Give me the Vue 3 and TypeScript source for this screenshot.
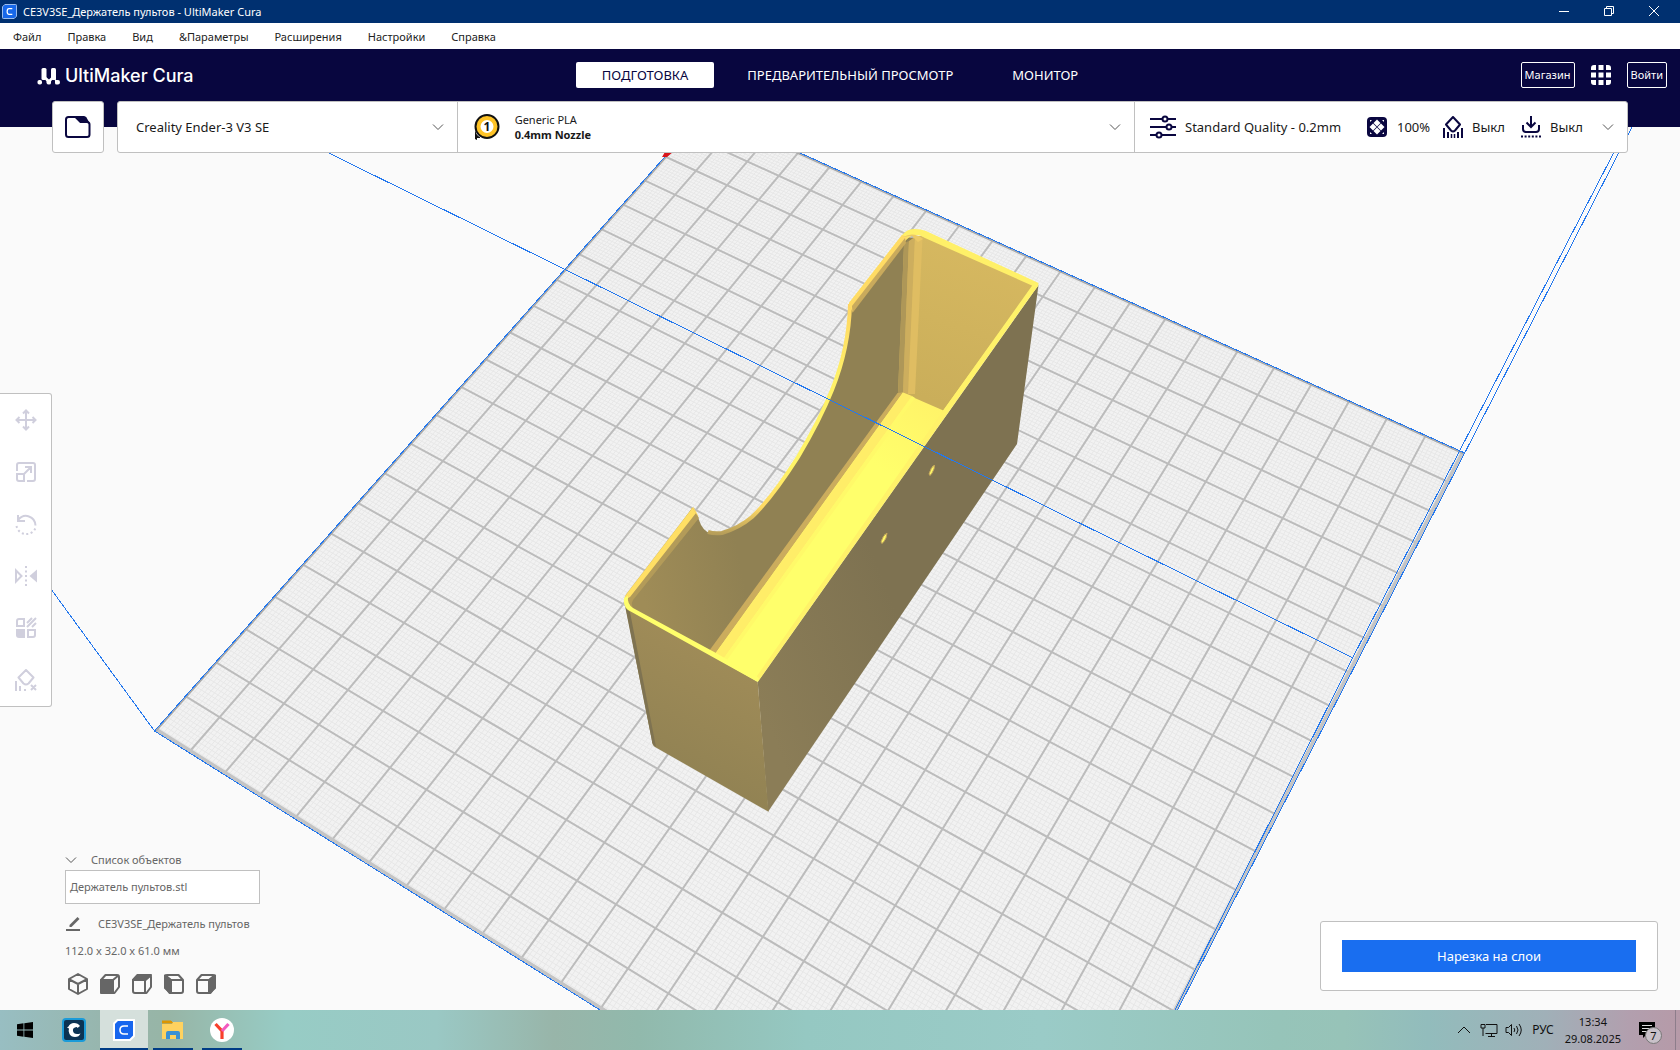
<script setup lang="ts">
import { ref } from 'vue'

type Point = [number, number]

const PLATE_CELLS = 22

/* Screen corners of the build plate: near left, far left, far right, near right */
const corners: Point[] = [
  [154.5, 731],
  [706, 110.5],
  [1464.7, 453],
  [1036.5, 1283.3],
]

/* Perspective mapping from plate units (0..1) to screen coordinates */
function plateProjection([a, b, c, d]: Point[]) {
  const sx = a[0] - b[0] + c[0] - d[0]
  const sy = a[1] - b[1] + c[1] - d[1]
  const dx1 = b[0] - c[0]
  const dx2 = d[0] - c[0]
  const dy1 = b[1] - c[1]
  const dy2 = d[1] - c[1]
  const det = dx1 * dy2 - dx2 * dy1
  const g = (sx * dy2 - dx2 * sy) / det
  const h = (dx1 * sy - sx * dy1) / det
  return (u: number, v: number): Point => {
    const w = g * u + h * v + 1
    return [
      ((b[0] - a[0] + g * b[0]) * u + (d[0] - a[0] + h * d[0]) * v + a[0]) / w,
      ((b[1] - a[1] + g * b[1]) * u + (d[1] - a[1] + h * d[1]) * v + a[1]) / w,
    ]
  }
}

const project = plateProjection(corners)

function segment(p: Point, q: Point): string {
  return `M${p[0].toFixed(1)} ${p[1].toFixed(1)}L${q[0].toFixed(1)} ${q[1].toFixed(1)}`
}

function gridPath(count: number): string {
  let d = ''
  for (let i = 1; i < count; i++) {
    const t = i / count
    d += segment(project(t, 0), project(t, 1)) + segment(project(0, t), project(1, t))
  }
  return d
}

const minorGrid = gridPath(PLATE_CELLS * 10)
const majorGrid = gridPath(PLATE_CELLS)
const plateOutline = 'M' + corners.map((p) => p.join(' ')).join('L') + 'Z'

const menus = ['Файл', 'Правка', 'Вид', '&Параметры', 'Расширения', 'Настройки', 'Справка']
const stages = ['ПОДГОТОВКА', 'ПРЕДВАРИТЕЛЬНЫЙ ПРОСМОТР', 'МОНИТОР']
const activeStage = ref(0)
const projectName = ref('CE3V3SE_Держатель пультов')
const views = ['3D', 'Спереди', 'Сверху', 'Слева', 'Справа']
const tools = ['Перемещение', 'Масштаб', 'Поворот', 'Зеркало', 'Параметры объекта', 'Блокировка поддержки']
</script>

<template>
  <div class="window">
    <header class="titlebar">
      <svg class="app-icon" viewBox="0 0 16 16">
        <path d="M3 .5h11.500q1 0 1 1V13l-2.500 2.500H1.500q-1 0-1-1V3z" fill="#1668ea" stroke="#a9c9f5" />
        <path d="M11 5H7.500Q5.500 5 5.500 8t2 3H11" fill="none" stroke="#fff" stroke-width="1.300" />
      </svg>
      <span class="title">CE3V3SE_Держатель пультов - UltiMaker Cura</span>
      <button class="win-btn" aria-label="Свернуть"><svg viewBox="0 0 12 12"><path d="M1 6.500h10" /></svg></button>
      <button class="win-btn" aria-label="Восстановить"><svg viewBox="0 0 12 12"><path d="M1.500 3.500h7v7h-7zM3.500 3.500v-2h7v7h-2" /></svg></button>
      <button class="win-btn" aria-label="Закрыть"><svg viewBox="0 0 12 12"><path d="M1 1l10 10M11 1L1 11" /></svg></button>
    </header>

    <nav class="menubar">
      <button v-for="m in menus" :key="m">{{ m }}</button>
    </nav>

    <div class="header">
      <div class="brand">
        <svg viewBox="0 0 24 17" fill="#fff">
          <rect x="4.500" y="0" width="5" height="12" rx="1.500" />
          <rect x="14" y="0" width="5" height="12" rx="1.500" />
          <path d="M8.500 8.500L12 11.500L15 8.500V12l-1 1.500V15q0 1.500-2 1.500T9.500 15v-1.500L8.500 12z" />
          <path d="M17 8.500l2 3.500h2q2 0 2 2.200T21 16.500h-1.500Q18 16.500 18 15v-2z" />
          <rect x="0.500" y="12" width="4.500" height="4.500" rx="1.800" />
        </svg>
        <span>UltiMaker Cura</span>
      </div>
      <div class="stages">
        <button v-for="(s, i) in stages" :key="s" :class="{ active: i === activeStage }" @click="activeStage = i">{{ s }}</button>
      </div>
      <div class="account">
        <button class="outlined">Магазин</button>
        <button class="apps" aria-label="Приложения">
          <svg viewBox="0 0 20 20" fill="#fff">
            <path d="M3 0h2v5H0V3q0-3 3-3zM7.500 0h5v5h-5zM15 0h2q3 0 3 3v2h-5zM0 7.500h5v5H0zM7.500 7.500h5v5h-5zM15 7.500h5v5h-5zM0 15h5v5H3q-3 0-3-3zM7.500 15h5v5h-5zM15 15h5v2q0 3-3 3h-2z" />
          </svg>
        </button>
        <button class="outlined">Войти</button>
      </div>
    </div>

    <main class="workspace">
      <svg class="scene" viewBox="0 127 1680 883" preserveAspectRatio="xMidYMid slice" role="img" aria-label="Сцена">
        <defs>
          <clipPath id="plate"><path :d="plateOutline" /></clipPath>
          <linearGradient id="side" gradientUnits="userSpaceOnUse" x1="750" y1="680" x2="900" y2="620">
            <stop offset="0" stop-color="#8b7d57" /><stop offset="1" stop-color="#7e7251" />
          </linearGradient>
          <linearGradient id="front" gradientUnits="userSpaceOnUse" x1="730" y1="650" x2="670" y2="770">
            <stop offset="0" stop-color="#a08c58" /><stop offset="1" stop-color="#918253" />
          </linearGradient>
          <linearGradient id="inner" gradientUnits="userSpaceOnUse" x1="640" y1="580" x2="740" y2="560">
            <stop offset="0" stop-color="#9f8c57" /><stop offset="1" stop-color="#908153" />
          </linearGradient>
          <linearGradient id="back" gradientUnits="userSpaceOnUse" x1="980" y1="250" x2="930" y2="400">
            <stop offset="0" stop-color="#d6b860" /><stop offset="1" stop-color="#caae5a" />
          </linearGradient>
          <linearGradient id="floor" gradientUnits="userSpaceOnUse" x1="930" y1="390" x2="870" y2="460">
            <stop offset="0" stop-color="#fff268" /><stop offset="1" stop-color="#ffff6b" />
          </linearGradient>
          <linearGradient id="arc" gradientUnits="userSpaceOnUse" x1="0" y1="305" x2="0" y2="535">
            <stop offset="0" stop-color="#ffd563" /><stop offset=".3" stop-color="#fff067" />
            <stop offset=".7" stop-color="#fff567" /><stop offset=".88" stop-color="#ffd964" /><stop offset="1" stop-color="#b39b59" />
          </linearGradient>
        </defs>

        <path :d="plateOutline" fill="#f2f2f2" />
        <g clip-path="url(#plate)" fill="none">
          <path :d="minorGrid" stroke="#e7e7e7" />
          <path :d="majorGrid" stroke="#bcbcbc" stroke-width="2" />
          <path d="M154.500 731L1036.500 1283.300L1464.700 453" stroke="#c4c4c4" stroke-width="8" />
          <path d="M154.500 731L706 110.500L1464.700 453" stroke="#aaa" stroke-width="4" />
        </g>
        <g class="volume">
          <path :d="plateOutline" />
          <path d="M40 574L154.500 731M1464.700 453L1632 127" />
        </g>
        <path d="M662 157l3-5h8l-6 5z" fill="#d8161c" />

        <!-- Long inner wall with the cut-out -->
        <path d="M625 600L692.300 508L697 515L701 525Q706 534 715 534Q731 533 752 517Q771 498 797 457Q818 422 830 393Q849 345 849 304L902 236L925 240L903 398L715 656L630 612Z" fill="url(#inner)" />
        <path d="M692 508Q695 512 697 517" stroke="#ffdc64" stroke-width="3" fill="none" />
        <path d="M708 532Q714 534 722 533Q739 528 752 517Q772 498 798 457Q820 420 832 390Q849 348 850 304" fill="none" stroke="url(#arc)" stroke-width="4" />
        <!-- Back wall and its rounded corner -->
        <path d="M904 246L916 236L922 236L1034 284L944 412L898 393Z" fill="url(#back)" />
        <path d="M904 243L909 241L903 393H898Z" fill="#ae9758" />
        <path d="M909 241L915 237L908 394L903 393Z" fill="#cdae5e" />
        <path d="M915 237L922.500 238L915 394H908Z" fill="#dfbd62" />
        <!-- Floor -->
        <path d="M902 392.500L944.500 411L942 415L757.700 681.700L712 652Z" fill="url(#floor)" />
        <path d="M897.500 393L903 392.500L715 654L709 651Z" fill="#cbac5d" />
        <path d="M903 392.500L912 396L724 658L715 654Z" fill="#ffed68" />
        <path d="M912 396L915 398L727 660L724 658Z" fill="#fff969" />
        <!-- Outer faces -->
        <path d="M757.700 681.700L1038.500 285L1017 444L768 811.700Z" fill="url(#side)" />
        <path d="M625.300 606L757.700 681.700L768.500 811.700L655 747Q652 745 652 741Z" fill="url(#front)" />
        <path d="M625.300 607L630 612L656 747Q652 744 652 741Z" fill="#7f7351" />
        <!-- Upper rim -->
        <path d="M849 303L902 235Q908 228 915 229Q921 229 926 231L1038.500 283L1038 286L941 415L942 412L1033 286L925 238Q915 231 906 240L852.500 311Z" fill="#fff068" />
        <path d="M849 303L902 235L908 237L852.500 312Z" fill="#ffdb64" />
        <path d="M852 306L905 238L906 243L852.500 313Z" fill="#c9aa5c" />
        <path d="M903 237Q914 231 923 239L918 242L912 236Z" fill="#ecc865" />
        <path d="M758 681.700L1038.500 285L1034 283L940 415L757 676Z" fill="#fff269" />
        <path d="M624 601Q625 595 628 592L692.300 508L699 518L633 600Q630 605 635 611Z" fill="#b39b59" />
        <path d="M624 600Q625 595 628 592L692.300 508L696 513L630 597Z" fill="#ffdf64" />
        <path d="M624 598Q623 606 628 610L757.700 682L759 678L716 653L633 608Q627 604 628 596Z" fill="#ffff6b" />
        <!-- Screw holes -->
        <path d="M930 475.500L929 474Q931 467 934.500 465L934 469Q932 474 930 475.500Z" fill="#fff968" stroke="#c4a65b" />
        <path d="M882 543.500L881 542Q883 535 887 533L886 538Q884 542 882 543.500Z" fill="#fff968" stroke="#c4a65b" />

        <path class="volume" d="M276 127L1352.700 657.700M1174 1012L1352.700 657.700L1627 127" />
      </svg>

      <div class="overlay">
        <div class="config-row">
          <button class="open-file" aria-label="Открыть файл">
            <svg width="28" height="24" viewBox="0 0 28 24">
              <path d="M2 4.500Q2 2 4.500 2h7l5 5H23q2.500 0 2.500 2.500v10Q25.500 22 23 22H4.500Q2 22 2 19.500z" fill="none" stroke="#0a0740" stroke-width="2" stroke-linejoin="round" />
              <path d="M11 1h9q1.500 0 2.500 1.500L25 7H16z" fill="#0a0740" />
            </svg>
          </button>
          <div class="config">
            <button class="machine">
              <span class="lg">Creality Ender-3 V3 SE</span>
              <svg class="chev" viewBox="0 0 12 8"><path d="M1 1.500l5 5 5-5" /></svg>
            </button>
            <button class="material">
              <svg width="27" height="28" viewBox="0 0 27 28">
                <circle cx="14" cy="13.500" r="11" fill="#fff" stroke="#111" stroke-width="3" />
                <circle cx="14" cy="13.500" r="8.500" fill="none" stroke="#fec327" stroke-width="4" />
                <path d="M2 26V14q0 8 5 10v1H4v2z" fill="#111" />
                <text x="14" y="18" text-anchor="middle">1</text>
              </svg>
              <span class="material-text"><span>Generic PLA</span><b>0.4mm Nozzle</b></span>
              <svg class="chev" viewBox="0 0 12 8"><path d="M1 1.500l5 5 5-5" /></svg>
            </button>
            <button class="settings">
              <svg width="26" height="24" viewBox="0 0 26 24" fill="none" stroke="#0a0740" stroke-width="2">
                <path d="M0 4h12M18 4h8M0 12h16M22 12h4M0 20h6M12 20h14" />
                <circle cx="15" cy="4" r="2.500" /><circle cx="19" cy="12" r="2.500" /><circle cx="9" cy="20" r="2.500" />
              </svg>
              <span class="lg profile">Standard Quality - 0.2mm</span>
              <svg width="20" height="20" viewBox="0 0 20 20">
                <rect width="20" height="20" rx="4" fill="#0a0740" />
                <path d="M10 2.500l3.500 3.500L10 9.500 6.500 6zM10 10.500l3.500 3.500-3.500 3.500L6.500 14zM6 6.500L9.500 10 6 13.500 2.500 10zM14 6.500l3.500 3.500-3.500 3.500-3.500-3.500zM3 5V3h2zM15 3h2v2zM3 15v2h2zM17 15v2h-2z" fill="#fff" />
              </svg>
              <span class="lg infill">100%</span>
              <svg width="20" height="22" viewBox="0 0 20 22" fill="none" stroke="#0a0740" stroke-width="2">
                <path d="M10 1l7 7.500-5 6q-2 2-4 0l-5-6z" stroke-linejoin="round" /><path d="M1 12v10M19 12v10M5 16v6M15 16v6" /><path d="M8.500 18v4M11.500 18v4" stroke-width="1.500" />
              </svg>
              <span class="lg support">Выкл</span>
              <svg width="20" height="22" viewBox="0 0 20 22" fill="none" stroke="#0a0740" stroke-width="2">
                <path d="M10 0v10M5.500 6.500L10 11l4.500-4.500M2 9v4q0 3 3 3h10q3 0 3-3V9" /><path d="M0 20.500h20" stroke-dasharray="2 1.600" />
              </svg>
              <span class="lg adhesion">Выкл</span>
              <svg class="chev" viewBox="0 0 12 8"><path d="M1 1.500l5 5 5-5" /></svg>
            </button>
          </div>
        </div>

        <div class="toolbar">
          <button v-for="(t, i) in tools" :key="t" :aria-label="t" disabled>
            <svg width="22" height="22" viewBox="0 0 22 22" fill="none" stroke="#d0cfdd" stroke-width="2">
              <path v-if="i === 0" d="M11 2v18M2 11h18M8 4.500L11 1.500l3 3M8 17.500l3 3 3-3M4.500 8l-3 3 3 3M17.500 8l3 3-3 3" />
              <path v-else-if="i === 1" d="M2 10V4q0-2 2-2h14q2 0 2 2v14q0 2-2 2h-6M2 13h7v7H4q-2 0-2-2zM9 13l7-7M10 6h6v6" />
              <g v-else-if="i === 2"><path d="M3 2v6h7M3 7Q8 1 14 3.500q6 2 6.500 9" /><path d="M1.500 13a10 10 0 0 0 19 2" stroke-dasharray="2 2.500" /></g>
              <g v-else-if="i === 3"><path d="M1 5.500v11l5.500-5.500z" /><path d="M11 1v20" stroke-dasharray="2 2.500" /><path d="M22 4.500v13L14.500 11z" fill="#d0cfdd" stroke="none" /></g>
              <g v-else-if="i === 4"><path d="M2 4q0-2 2-2h5v7H2zM13 13h7v5q0 2-2 2h-5zM12 6l5-5M12 10l9-9M17 10l4-4" /><path d="M1 12h9v9H4q-3 0-3-3z" fill="#d0cfdd" stroke="none" /></g>
              <path v-else d="M11 1l7.500 7.500-5 6q-2.500 2-5 0l-5-6zM1 12v10M5 17v5M10 20v2M16 16l5 5M21 16l-5 5" stroke-linejoin="round" />
            </svg>
          </button>
        </div>

        <div class="bottom">
          <section class="objects">
            <button class="list-head">
              <svg class="chev" viewBox="0 0 12 8"><path d="M1 1.500l5 5 5-5" /></svg>
              <span>Список объектов</span>
            </button>
            <button class="object">Держатель пультов.stl</button>
            <div class="job">
              <svg width="16" height="14" viewBox="0 0 16 14" fill="#666"><path d="M12.500 0l2 2-8 8H4.500V8zM1 12h14v2H1z" /></svg>
              <input v-model="projectName" aria-label="Имя проекта" />
            </div>
            <div class="dims">112.0 x 32.0 x 61.0 мм</div>
            <div class="views">
              <button v-for="(v, i) in views" :key="v" :aria-label="v">
                <svg width="20" height="22" viewBox="0 0 20 22" fill="none" stroke="#666" stroke-width="2" stroke-linejoin="round">
                  <path v-if="i === 0" d="M10 1l9 5v10l-9 5-9-5V6zM1.500 6.500L10 11l8.500-4.500M10 11v10" />
                  <g v-else :transform="i === 3 ? 'translate(20 0) scale(-1 1)' : undefined">
                    <path d="M1 7h12v13H3q-2 0-2-2zM1 7l4.500-5H17q2 0 2 2v10l-4.500 6H13M13 7l6-5" />
                    <path v-if="i === 1" d="M1 7h12v13H1z" fill="#666" />
                    <path v-if="i === 2" d="M1 7l5-5h13l-5.500 5z" fill="#666" />
                    <path v-if="i > 2" d="M13.500 7L19 2.500V15l-5.500 5z" fill="#666" />
                  </g>
                </svg>
              </button>
            </div>
          </section>
          <section class="action"><button>Нарезка на слои</button></section>
        </div>
      </div>
    </main>

    <footer class="taskbar">
      <button class="task start" aria-label="Пуск"><svg width="16" height="16" viewBox="0 0 16 16"><path d="M0 2.200L6.500 1.300v6.300H0zM7.300 1.200L16 0v7.600H7.300zM0 8.400h6.500v6.300L0 13.800zM7.300 8.400H16V16l-8.700-1.200z" /></svg></button>
      <button class="task" aria-label="Creality Print">
        <svg width="24" height="24" viewBox="0 0 24 24">
          <rect x="1" y="1" width="22" height="22" rx="3" fill="#0c3353" stroke="#1b9bd8" stroke-width="2" />
          <path d="M18 8Q16 5 12 5T6.500 8.500L5 9.500l2 1Q6 13 7.500 16T13 19q4 0 5.500-3.500-2 .5-3.500.5-3.500 0-4-3T13 9.500q2-1 2.500.5z" fill="#fff" />
        </svg>
      </button>
      <button class="task open active" aria-label="UltiMaker Cura">
        <svg width="22" height="22" viewBox="0 0 22 22"><path d="M4.500 1H21v16l-4 4H1V4.500z" fill="#1766ee" stroke="#fff" stroke-width="2" /><path d="M15 7h-4Q7 7 7 11t4 4h4" fill="none" stroke="#fff" stroke-width="1.600" /></svg>
      </button>
      <button class="task open" aria-label="Проводник">
        <svg width="22" height="20" viewBox="0 0 22 20"><path d="M0 1h9l2 2H0z" fill="#dc9500" stroke="#dc9500" /><path d="M0 4h10l1-2h10v17H0z" fill="#ffd25f" /><path d="M4 19v-6q0-2 2-2h10q2 0 2 2v6h-4v-4H8v4z" fill="#3b91d4" /></svg>
      </button>
      <button class="task open" aria-label="Яндекс Браузер">
        <svg width="24" height="24" viewBox="0 0 24 24"><circle cx="12" cy="12" r="12" fill="#fff" /><path d="M5.500 6l6.500 7v8" fill="none" stroke="#f8402c" stroke-width="3.200" /><path d="M12 13l6.500-7" stroke="#f25ac0" stroke-width="3.200" /></svg>
      </button>
      <div class="tray">
        <svg width="14" height="8" viewBox="0 0 14 8"><path d="M1 7l6-6 6 6" /></svg>
        <svg class="net" width="18" height="14" viewBox="0 0 18 14"><path d="M6 1.500h11v9H5.500M1 1.500h4v3.500H1zM3 5v8M8 13.500h7M11.500 10.500v3" /></svg>
        <svg class="sound" width="18" height="14" viewBox="0 0 18 14"><path d="M1 4.500h2.500l3-3v11l-3-3H1zM9 5q1.500 2 0 4M11.500 3q3 4 0 8M14 1q4.500 6 0 12" /></svg>
        <span class="lang">РУС</span>
        <time class="clock"><span>13:34</span><span>29.08.2025</span></time>
        <button class="notif" aria-label="Уведомления">
          <svg width="18" height="16" viewBox="0 0 18 16"><path d="M1 0h16v13H8l-3 3v-3H1z" fill="#000" stroke="none" /><path d="M4 3.500h10M4 6.500h10M4 9.500h6" stroke="#ddd" /></svg>
          <span class="badge">7</span>
        </button>
      </div>
    </footer>
  </div>
</template>

<style>
body { margin: 0; }
</style>

<style scoped>
.window {
  display: flex;
  flex-direction: column;
  min-height: 100vh;
  font-family: "Noto Sans", "Open Sans", sans-serif;
  font-size: 11px;
  line-height: 16px;
  color: #191919;
  background: #fafafa;
}
button {
  font: inherit;
  color: inherit;
  background: none;
  border: 0;
  padding: 0;
  margin: 0;
  cursor: pointer;
  white-space: nowrap;
}
svg { display: block; flex: none; }

.titlebar { display: flex; align-items: center; height: 23px; background: #003070; color: #fff; padding: 0 4px 0 2px; }
.app-icon { width: 15px; height: 15px; }
.title { flex: 1; margin-left: 6px; }
.win-btn { width: 45px; height: 21px; align-self: flex-start; display: grid; place-items: center; }
.win-btn svg { width: 12px; height: 12px; fill: none; stroke: #fff; }

.menubar { display: flex; gap: 26px; box-sizing: border-box; height: 26px; padding: 2px 0 0 13px; background: #fff; color: #222; }

.header {
  display: grid;
  grid-template-columns: 1fr auto 1fr;
  align-items: start;
  height: 65px;
  padding: 13px 13px 0;
  background: #08063f;
  color: #fff;
}
.brand { display: flex; align-items: center; gap: 4px; height: 28px; padding-left: 24px; font-family: Inter, sans-serif; font-size: 18px; font-weight: 500; }
.brand svg { width: 24px; height: 17px; }
.stages { display: flex; gap: 7px; }
.stages button { height: 26px; padding: 0 26px; font-size: 13px; border-radius: 2px; }
.stages .active { background: #fff; color: #08063f; }
.account { display: flex; justify-content: flex-end; gap: 16px; }
.outlined { height: 26px; padding: 0 3px; border: 1px solid #fff; border-radius: 2px; }
.apps { width: 20px; }
.apps svg { width: 20px; height: 20px; }

.workspace { flex: 1; display: grid; position: relative; min-height: 700px; }
.scene { position: absolute; inset: 0; width: 100%; height: 100%; }
.volume { fill: none; stroke: #2478ee; shape-rendering: crispEdges; }
.overlay { position: relative; display: flex; flex-direction: column; justify-content: space-between; margin-top: -26px; }

.config-row { display: flex; gap: 13px; padding: 0 52px; }
.open-file { width: 52px; height: 52px; box-sizing: border-box; display: grid; place-items: center; background: #fff; border: 1px solid #c0c0c0; border-radius: 3px; }
.config { flex: 1; display: grid; grid-template-columns: 1fr 2fr 493px; box-sizing: border-box; height: 52px; background: #fff; border: 1px solid #c0c0c0; border-radius: 3px; }
.config button { display: flex; align-items: center; text-align: left; }
.config .machine { padding: 0 13px 0 18px; }
.config .material { padding: 0 13px 0 15px; border-left: 1px solid #c0c0c0; }
.material text { font-size: 12px; font-weight: 700; fill: #111; }
.material-text { display: flex; flex-direction: column; margin-left: 15px; line-height: 15px; }
.chev { width: 12px; height: 8px; fill: none; stroke: #555; }
.config .chev { margin-left: auto; }
.lg { font-size: 13px; }
.config .settings { padding: 0 13px 0 15px; border-left: 1px solid #c0c0c0; }
.profile { width: 182px; margin-left: 9px; }
.infill { width: 38px; margin: 0 8px 0 10px; }
.support { width: 40px; margin: 0 9px; }
.adhesion { margin-left: 9px; }

.toolbar { display: flex; flex-direction: column; width: 52px; box-sizing: border-box; background: #fff; border: 1px solid #c0c0c0; border-left: 0; border-radius: 0 3px 3px 0; margin-top: 96px; }
.toolbar button { height: 52px; display: grid; place-items: center; }

.bottom { display: flex; justify-content: space-between; align-items: flex-end; padding: 0 22px 0 65px; }
.objects { display: flex; flex-direction: column; width: 195px; padding-bottom: 15px; color: #666; }
.list-head { display: flex; align-items: center; gap: 14px; height: 20px; }
.object { height: 34px; padding: 0 4px; text-align: left; background: #fff; border: 1px solid #c0c0c0; }
.job { display: flex; align-items: center; gap: 17px; height: 39px; }
.job input { flex: 1; min-width: 0; padding: 0; border: 0; background: none; font: inherit; color: inherit; }
.dims { height: 16px; margin-bottom: 14px; }
.views { display: flex; gap: 12px; padding-left: 3px; }
.action { width: 338px; box-sizing: border-box; padding: 18px 21px; margin-bottom: 19px; background: #fff; border: 1px solid #c0c0c0; border-radius: 3px; }
.action button { width: 100%; height: 32px; background: #196ef0; color: #fff; font-size: 13px; }

.taskbar {
  position: relative;
  display: flex;
  height: 40px;
  background: linear-gradient(90deg, #98bec2 0, #97b6ae 6%, #97b5a6 10%, #97ccc5 17%, #9ac8c4 26%, #98b5a9 33%, #91b9ac 38%, #95c8c2 48%, #9acbc7 62%, #96c4b9 76%, #97c3b8 80%, #92bcbc 85%, #a0b0b8 92%, #b29fae 97%, #b69aa8 100%);
}
.task { width: 49px; display: grid; place-items: center; box-sizing: border-box; }
.task.open { border-bottom: 2px solid #003c85; width: 40px; margin: 0 3px 0 6px; padding-top: 2px; }
.task.open.active { width: 48px; margin: 0 -1px 0 2px; background: #d5e0dc; }
.tray { display: flex; align-items: center; margin-left: auto; margin-right: 4px; padding-right: 19px; border-right: 1px solid #8d7d8b; color: #111; }
.tray svg { fill: none; stroke: #111; }
.net { margin-left: 9px; }
.sound { margin-left: 7px; }
.lang { margin-left: 9px; font-size: 12px; }
.clock { display: flex; flex-direction: column; align-items: center; margin-left: 11px; line-height: 17px; }
.notif { position: relative; margin-left: 17px; }
.badge { position: absolute; left: 7px; top: 5px; width: 15px; height: 15px; line-height: 15px; border: 1px solid #777; border-radius: 50%; background: #c9c1c9; color: #111; }
</style>
